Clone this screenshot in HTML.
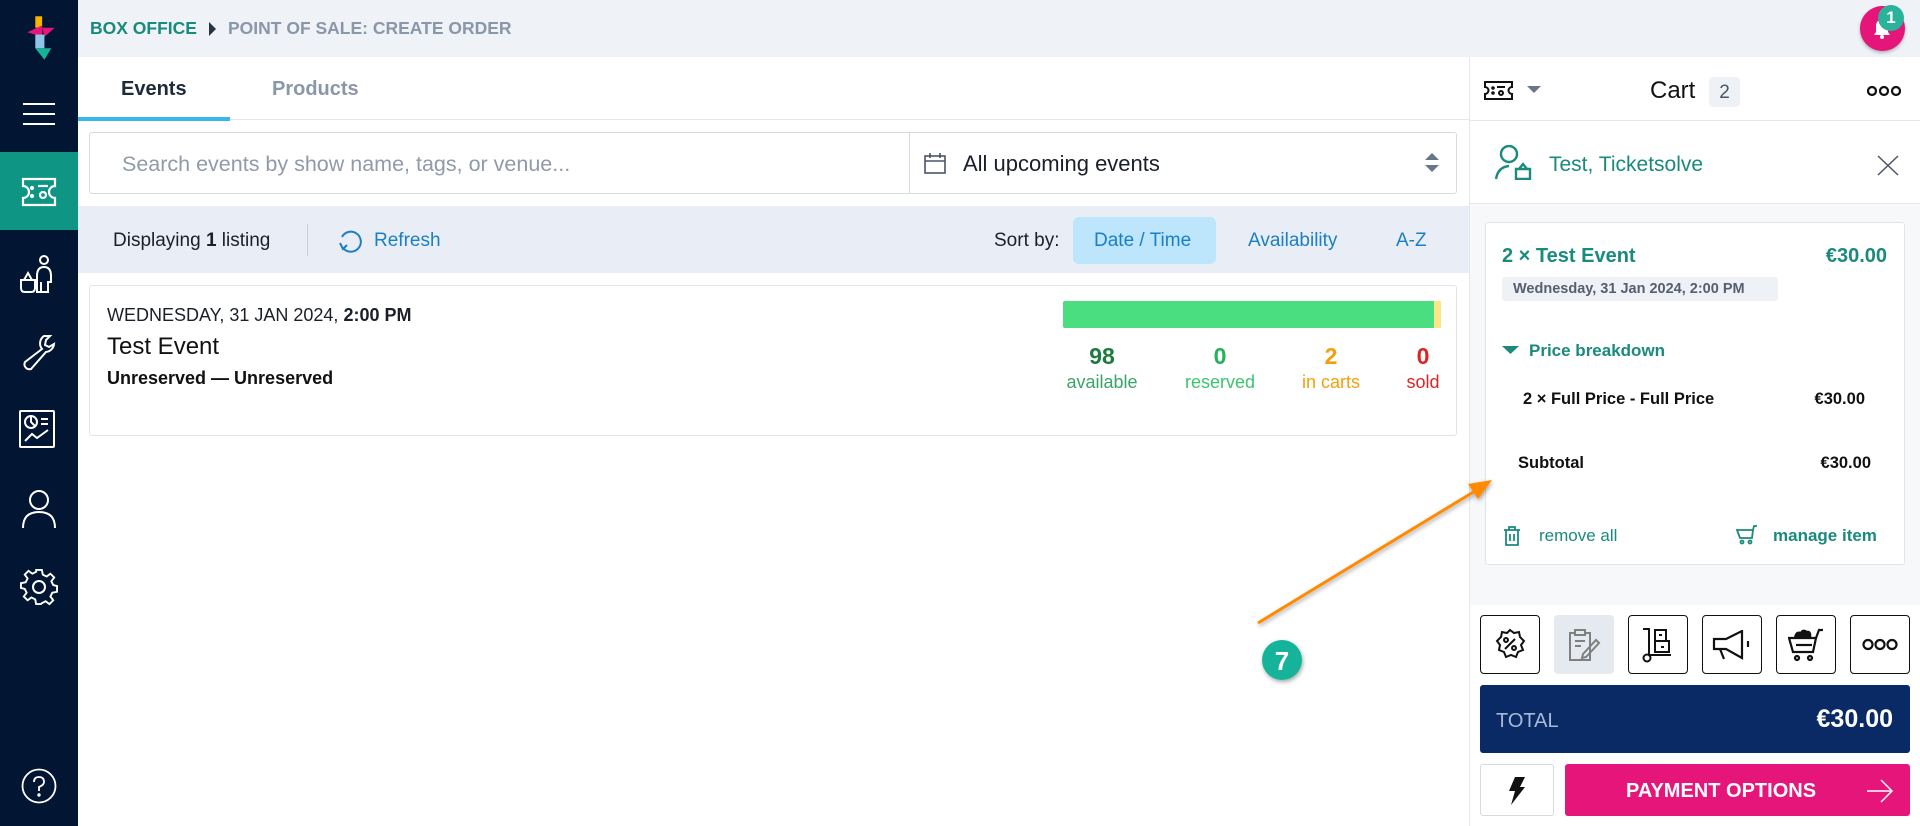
<!DOCTYPE html>
<html><head><meta charset="utf-8"><style>
*{margin:0;padding:0;box-sizing:border-box}
body{width:1920px;height:826px;position:relative;overflow:hidden;background:#fff;font-family:"Liberation Sans",sans-serif;color:#1a1f2b}
.a{position:absolute}
.sb{left:0;top:0;width:78px;height:826px;background:#021533}
.t{white-space:nowrap;line-height:1}
</style></head><body>
<div class="a sb"></div>
<!-- logo -->
<svg class="a" style="left:22px;top:14px" width="38" height="48" viewBox="0 0 30 42">
<polygon points="10,2 16,2 16,12 10,12" fill="#f7b500"/>
<polygon points="3,16 16,10 16,20" fill="#e5157a"/>
<polygon points="16,12 27,12 18,20" fill="#e5157a"/>
<polygon points="10,18 18,18 18,30 10,30" fill="#8ec6e8"/>
<polygon points="10,30 24,30 18,40" fill="#14b39a"/>
</svg>
<!-- hamburger -->
<svg class="a" style="left:23px;top:102px" width="32" height="24"><g stroke="#fff" stroke-width="2"><line x1="0" y1="2" x2="32" y2="2"/><line x1="0" y1="12" x2="32" y2="12"/><line x1="0" y1="22" x2="32" y2="22"/></g></svg>
<div class="a" style="left:0;top:152px;width:78px;height:78px;background:#0e9583"></div>
<svg class="a" style="left:20px;top:177px" width="38" height="30" viewBox="0 0 38 30" fill="none" stroke="#fff" stroke-width="2.2"><path d="M3 2H35V9A6 6 0 0 0 35 21V28H3V21A6 6 0 0 0 3 9Z"/><circle cx="12" cy="11" r="1" fill="#fff"/><circle cx="12" cy="19" r="1" fill="#fff"/><line x1="18" y1="9" x2="28" y2="9"/><circle cx="23" cy="18" r="3"/></svg>
<svg class="a" style="left:19px;top:254px" width="36" height="40" viewBox="0 0 36 40" fill="none" stroke="#fff" stroke-width="2"><circle cx="25" cy="6" r="4"/><path d="M18 38V22Q18 13 25 13Q32 13 32 22V28H29V38ZM22 38V28"/><path d="M2 26H16V34Q16 38 12 38H6Q2 38 2 34ZM5 26L9 19L13 26"/></svg>
<svg class="a" style="left:20px;top:334px" width="36" height="38" viewBox="0 0 36 38" fill="none" stroke="#fff" stroke-width="2"><path d="M24 2A9 9 0 0 0 22 15L5 28A5 5 0 0 0 11 35L26 18A9 9 0 0 0 34 10L29 13L25 11L26 6L30 2Z"/></svg>
<svg class="a" style="left:19px;top:410px" width="36" height="38" viewBox="0 0 36 38" fill="none" stroke="#fff" stroke-width="2"><rect x="1" y="1" width="34" height="36" rx="1"/><circle cx="12" cy="12" r="6"/><path d="M12 6V12L16 16"/><path d="M22 9H29M22 14H29"/><path d="M6 31L13 24L18 28L29 20"/></svg>
<svg class="a" style="left:21px;top:489px" width="36" height="40" viewBox="0 0 36 40" fill="none" stroke="#fff" stroke-width="2"><circle cx="18" cy="11" r="9"/><path d="M2 39Q2 23 18 23Q34 23 34 39"/></svg>
<svg class="a" style="left:20px;top:568px" width="38" height="38" viewBox="0 0 38 38" fill="none" stroke="#fff" stroke-width="2"><path d="M16 2H22L23 7L27 9L31 6L35 10L32 14L34 18L38 19V25L33 26L31 30L34 34L30 38L26 35L22 37L21 38H16L15 33L11 31L7 34L3 30L6 26L4 22L0 21V16L5 15L7 11L4 7L8 3L12 6L16 4Z" transform="scale(.95) translate(1,0)"/><circle cx="19" cy="19" r="6"/></svg>
<svg class="a" style="left:21px;top:768px" width="36" height="36" viewBox="0 0 36 36" fill="none" stroke="#fff" stroke-width="1.8"><circle cx="18" cy="18" r="16.5"/><path d="M13 14Q13 9 18 9Q23 9 23 14Q23 17 18 19V23"/><circle cx="18" cy="27" r="0.8" fill="#fff"/></svg>

<!-- header -->
<div class="a" style="left:78px;top:0;width:1842px;height:57px;background:#eff2f7"></div>
<div class="a t" style="left:90px;top:20px;font-size:17.5px;font-weight:bold;color:#1a8a7d">BOX OFFICE</div>
<svg class="a" style="left:209px;top:22px" width="8" height="14"><polygon points="0,0 7,7 0,14" fill="#2a3342"/></svg>
<div class="a t" style="left:228px;top:20px;font-size:17.5px;font-weight:bold;color:#8a97a8">POINT OF SALE: CREATE ORDER</div>
<div class="a" style="left:1860px;top:6px;width:45px;height:45px;border-radius:50%;background:#e5157a;box-shadow:0 2px 3px rgba(0,0,0,.25)"></div>
<svg class="a" style="left:1870px;top:16px" width="24" height="24" viewBox="0 0 24 24"><path d="M4 19L6 16V10Q6 4 12 4Q18 4 18 10V16L20 19Z" fill="#fff"/><circle cx="12" cy="21" r="2" fill="#fff"/></svg>
<div class="a t" style="left:1878px;top:5px;width:26px;height:26px;border-radius:50%;background:#2ab39a;color:#fff;font-weight:bold;font-size:17px;text-align:center;line-height:26px">1</div>

<!-- tabs -->
<div class="a t" style="left:121px;top:79px;font-size:20px;font-weight:bold;color:#1d2a3a">Events</div>
<div class="a t" style="left:272px;top:79px;font-size:20px;font-weight:bold;color:#8a97a8">Products</div>
<div class="a" style="left:78px;top:119px;width:1391px;height:1px;background:#e3e7ec"></div>
<div class="a" style="left:78px;top:117px;width:152px;height:4px;background:#38b6f0"></div>

<!-- search -->
<div class="a" style="left:89px;top:132px;width:1368px;height:62px;border:1px solid #d6dae0;border-radius:3px"></div>
<div class="a" style="left:909px;top:133px;width:1px;height:60px;background:#d6dae0"></div>
<div class="a t" style="left:122px;top:154px;font-size:21.5px;color:#8f9aab">Search events by show name, tags, or venue...</div>
<svg class="a" style="left:924px;top:153px" width="22" height="21" viewBox="0 0 22 21" fill="none" stroke="#4a5566" stroke-width="1.6"><rect x="1" y="3" width="20" height="17"/><line x1="1" y1="8" x2="21" y2="8"/><line x1="6" y1="0" x2="6" y2="5"/><line x1="16" y1="0" x2="16" y2="5"/></svg>
<div class="a t" style="left:963px;top:153px;font-size:22px;color:#1a1f2b">All upcoming events</div>
<svg class="a" style="left:1425px;top:153px" width="14" height="20"><polygon points="7,0 14,7 0,7" fill="#6b7588"/><polygon points="0,12 14,12 7,19" fill="#6b7588"/></svg>

<!-- filter bar -->
<div class="a" style="left:78px;top:206px;width:1391px;height:67px;background:#e9eef6"></div>
<div class="a t" style="left:113px;top:231px;font-size:19px;color:#1a1f2b">Displaying <b>1</b> listing</div>
<div class="a" style="left:307px;top:224px;width:1px;height:32px;background:#c8d0dc"></div>
<svg class="a" style="left:338px;top:229px" width="24" height="24" viewBox="0 0 24 24" fill="none" stroke="#1b7fc4" stroke-width="2"><path d="M6 20A10 10 0 1 0 4 8"/><path d="M2 14L5 20L9 16"/></svg>
<div class="a t" style="left:374px;top:231px;font-size:19px;color:#1b7fc4">Refresh</div>
<div class="a t" style="left:994px;top:231px;font-size:19px;color:#1a1f2b">Sort by:</div>
<div class="a" style="left:1073px;top:217px;width:143px;height:47px;border-radius:6px;background:#bde5fb"></div>
<div class="a t" style="left:1094px;top:231px;font-size:19px;color:#1b7fc4">Date / Time</div>
<div class="a t" style="left:1248px;top:231px;font-size:19px;color:#1b7fc4">Availability</div>
<div class="a t" style="left:1396px;top:231px;font-size:19px;color:#1b7fc4">A-Z</div>

<!-- event card -->
<div class="a" style="left:89px;top:285px;width:1368px;height:151px;border:1px solid #e1e5ea;border-radius:3px"></div>
<div class="a t" style="left:107px;top:306px;font-size:18px;color:#1a1f2b">WEDNESDAY, 31 JAN 2024, <b>2:00 PM</b></div>
<div class="a t" style="left:107px;top:335px;font-size:24px;color:#111">Test Event</div>
<div class="a t" style="left:107px;top:369px;font-size:18px;font-weight:bold;color:#111">Unreserved — Unreserved</div>
<div class="a" style="left:1063px;top:301px;width:371px;height:27px;background:#4ade80;border-radius:2px 0 0 2px"></div>
<div class="a" style="left:1434px;top:301px;width:7px;height:27px;background:#fde68a"></div>
<div class="a t" style="left:1052px;top:345px;width:100px;text-align:center;font-size:23px;font-weight:bold;color:#1f7a3f">98</div>
<div class="a t" style="left:1052px;top:373px;width:100px;text-align:center;font-size:18px;color:#3aa56a">available</div>
<div class="a t" style="left:1170px;top:345px;width:100px;text-align:center;font-size:23px;font-weight:bold;color:#22b35a">0</div>
<div class="a t" style="left:1170px;top:373px;width:100px;text-align:center;font-size:18px;color:#3cc46f">reserved</div>
<div class="a t" style="left:1281px;top:345px;width:100px;text-align:center;font-size:23px;font-weight:bold;color:#f59e0b">2</div>
<div class="a t" style="left:1281px;top:373px;width:100px;text-align:center;font-size:18px;color:#f59e0b">in carts</div>
<div class="a t" style="left:1385px;top:345px;width:76px;text-align:center;font-size:23px;font-weight:bold;color:#dc2626">0</div>
<div class="a t" style="left:1385px;top:373px;width:76px;text-align:center;font-size:18px;color:#dc2626">sold</div>

<!-- right panel -->
<div class="a" style="left:1469px;top:57px;width:451px;height:769px;background:#f7f8fa;border-left:1px solid #e3e7ec"></div>
<div class="a" style="left:1470px;top:57px;width:450px;height:64px;background:#fff;border-bottom:1px solid #e3e7ec"></div>
<svg class="a" style="left:1484px;top:81px" width="29" height="19" viewBox="0 0 29 19" fill="none" stroke="#111" stroke-width="2"><path d="M1 1H28V6A3.5 3.5 0 0 0 28 13V18H1V13A3.5 3.5 0 0 0 1 6Z"/><circle cx="9" cy="7" r=".8" fill="#111"/><circle cx="9" cy="12" r=".8" fill="#111"/><line x1="13" y1="6" x2="21" y2="6"/><circle cx="17" cy="12" r="2"/></svg>
<svg class="a" style="left:1527px;top:86px" width="14" height="8"><polygon points="0,0 14,0 7,7" fill="#6b7588"/></svg>
<div class="a t" style="left:1650px;top:79px;font-size:24px;color:#111">Cart</div>
<div class="a t" style="left:1709px;top:77px;width:31px;height:30px;border-radius:4px;background:#eef1f5;color:#4a5566;font-size:19px;text-align:center;line-height:32px">2</div>
<svg class="a" style="left:1867px;top:85px" width="34" height="12" fill="none" stroke="#111" stroke-width="2.2"><circle cx="5" cy="6" r="4"/><circle cx="17" cy="6" r="4"/><circle cx="29" cy="6" r="4"/></svg>
<div class="a" style="left:1470px;top:121px;width:450px;height:83px;background:#fff;border-bottom:1px solid #e3e7ec"></div>
<svg class="a" style="left:1494px;top:145px" width="38" height="35" viewBox="0 0 38 35" fill="none" stroke="#1a8a7d" stroke-width="2.4"><circle cx="15" cy="9" r="8"/><path d="M2 34Q4 22 15 21"/><path d="M22 24H36V34H22Z"/><path d="M25 24L29 19L33 24"/></svg>
<div class="a t" style="left:1549px;top:154px;font-size:21px;color:#1a8a7d">Test, Ticketsolve</div>
<svg class="a" style="left:1877px;top:155px" width="22" height="21" stroke="#4a5566" stroke-width="1.5"><line x1="1" y1="1" x2="21" y2="20"/><line x1="21" y1="1" x2="1" y2="20"/></svg>

<div class="a" style="left:1485px;top:222px;width:420px;height:343px;background:#fff;border:1px solid #e1e5ea;border-radius:3px"></div>
<div class="a t" style="left:1502px;top:246px;font-size:20px;font-weight:bold;color:#1a8a7d">2 × Test Event</div>
<div class="a t" style="left:1780px;top:246px;width:107px;text-align:right;font-size:20px;font-weight:bold;color:#1a8a7d">€30.00</div>
<div class="a t" style="left:1502px;top:277px;width:276px;height:24px;border-radius:3px;background:#eef1f5;color:#555f70;font-size:14.5px;font-weight:bold;line-height:24px;padding-left:11px">Wednesday, 31 Jan 2024, 2:00 PM</div>
<svg class="a" style="left:1502px;top:346px" width="17" height="9"><polygon points="0,0 17,0 8.5,8" fill="#1a8a7d"/></svg>
<div class="a t" style="left:1529px;top:342px;font-size:17px;font-weight:bold;color:#1a8a7d">Price breakdown</div>
<div class="a t" style="left:1523px;top:391px;font-size:16.5px;font-weight:bold;color:#111">2 × Full Price - Full Price</div>
<div class="a t" style="left:1760px;top:391px;width:105px;text-align:right;font-size:16.5px;font-weight:bold;color:#111">€30.00</div>
<div class="a t" style="left:1518px;top:455px;font-size:16.5px;font-weight:bold;color:#111">Subtotal</div>
<div class="a t" style="left:1766px;top:455px;width:105px;text-align:right;font-size:16.5px;font-weight:bold;color:#111">€30.00</div>
<svg class="a" style="left:1503px;top:526px" width="18" height="20" viewBox="0 0 18 20" fill="none" stroke="#1a8a7d" stroke-width="1.8"><path d="M1 4H17M6 4V1H12V4M3 4V19H15V4M7 8V15M11 8V15"/></svg>
<div class="a t" style="left:1539px;top:527px;font-size:17px;color:#1a8a7d">remove all</div>
<svg class="a" style="left:1736px;top:525px" width="22" height="20" viewBox="0 0 22 20" fill="none" stroke="#1a8a7d" stroke-width="1.8"><path d="M1 5H17L16 13H4ZM17 5L18 1H21"/><circle cx="6" cy="17" r="1.5"/><circle cx="14" cy="17" r="1.5"/></svg>
<div class="a t" style="left:1773px;top:527px;font-size:17px;font-weight:bold;color:#1a8a7d">manage item</div>

<div class="a" style="left:1470px;top:605px;width:450px;height:221px;background:#fff"></div>
<div class="a" style="left:1480px;top:615px;width:60px;height:59px;border:1.5px solid #111;border-radius:4px"></div>
<svg class="a" style="left:1494px;top:628px" width="32" height="32" viewBox="0 0 32 32" fill="none" stroke="#111" stroke-width="2"><path d="M16 2L20 5L25 4L26 9L30 13L27 17L29 22L24 24L22 29L17 27L12 29L10 24L5 22L6 17L3 13L7 9L8 4L13 5Z"/><line x1="11" y1="21" x2="21" y2="11"/><circle cx="12" cy="12" r="2"/><circle cx="20" cy="20" r="2"/></svg>
<div class="a" style="left:1554px;top:615px;width:60px;height:59px;background:#e5e9f0;border-radius:4px"></div>
<svg class="a" style="left:1566px;top:627px" width="36" height="36" viewBox="0 0 36 36" fill="none" stroke="#808080" stroke-width="2"><path d="M20 6H24V33H4V6H8"/><rect x="9" y="3" width="10" height="5"/><line x1="9" y1="14" x2="19" y2="14"/><line x1="9" y1="19" x2="15" y2="19"/><path d="M17 27L30 13L33 16L20 30L16 31Z"/></svg>
<div class="a" style="left:1628px;top:615px;width:60px;height:59px;border:1.5px solid #111;border-radius:4px"></div>
<svg class="a" style="left:1641px;top:627px" width="34" height="36" viewBox="0 0 34 36" fill="none" stroke="#111" stroke-width="2"><path d="M2 2H8V28H30"/><circle cx="6" cy="31" r="3.5"/><rect x="14" y="3" width="11" height="11"/><rect x="14" y="14" width="14" height="11"/><line x1="18" y1="8" x2="21" y2="8"/><line x1="20" y1="20" x2="23" y2="20"/></svg>
<div class="a" style="left:1702px;top:615px;width:60px;height:59px;border:1.5px solid #111;border-radius:4px"></div>
<svg class="a" style="left:1712px;top:630px" width="40" height="30" viewBox="0 0 40 30" fill="none" stroke="#111" stroke-width="2.2"><path d="M2 9H14L30 1V28L14 19H2Z"/><path d="M8 19L12 29"/><line x1="36" y1="11" x2="36" y2="17"/></svg>
<div class="a" style="left:1776px;top:615px;width:60px;height:59px;border:1.5px solid #111;border-radius:4px"></div>
<svg class="a" style="left:1788px;top:627px" width="36" height="36" viewBox="0 0 36 36" fill="none" stroke="#111" stroke-width="2.2"><path d="M1 11H28L25 25H5Z"/><path d="M28 11L31 3H35"/><line x1="8" y1="18" x2="24" y2="18"/><circle cx="9" cy="31" r="2"/><circle cx="22" cy="31" r="2"/><path d="M7 11Q8 4 13 6Q15 2 19 5Q23 4 22 11" fill="#111"/></svg>
<div class="a" style="left:1850px;top:615px;width:60px;height:59px;border:1.5px solid #111;border-radius:4px"></div>
<svg class="a" style="left:1862px;top:638px" width="36" height="13" fill="none" stroke="#111" stroke-width="2.2"><circle cx="6" cy="6.5" r="4.5"/><circle cx="18" cy="6.5" r="4.5"/><circle cx="30" cy="6.5" r="4.5"/></svg>

<div class="a" style="left:1480px;top:685px;width:430px;height:68px;background:#0a2a66;border-radius:3px"></div>
<div class="a t" style="left:1496px;top:711px;font-size:20px;color:#a8b8d8">TOTAL</div>
<div class="a t" style="left:1750px;top:707px;width:143px;text-align:right;font-size:25px;font-weight:bold;color:#fff">€30.00</div>
<div class="a" style="left:1480px;top:764px;width:74px;height:52px;border:1px solid #d6dae0;border-radius:3px;background:#fff"></div>
<svg class="a" style="left:1508px;top:777px" width="18" height="28" viewBox="0 0 18 28"><polygon points="7,0 17,0 12,10 17,10 3,28 7,14 1,14" fill="#111"/></svg>
<div class="a" style="left:1565px;top:764px;width:345px;height:52px;background:#e5157a;border-radius:3px"></div>
<div class="a t" style="left:1626px;top:781px;font-size:20px;font-weight:bold;color:#fff">PAYMENT OPTIONS</div>
<svg class="a" style="left:1867px;top:779px" width="27" height="24" fill="none" stroke="#fff" stroke-width="1.5"><line x1="0" y1="12" x2="25" y2="12"/><path d="M14 1L25 12L14 23"/></svg>

<!-- annotation -->
<svg class="a" style="left:0;top:0" width="1920" height="826">
<defs><filter id="sh"><feDropShadow dx="1" dy="2" stdDeviation="2" flood-opacity=".35"/></filter></defs>
<g filter="url(#sh)"><line x1="1258" y1="623" x2="1480" y2="488" stroke="#ff8a00" stroke-width="3"/>
<polygon points="1492,480 1468,484 1478,499" fill="#ff8a00"/>
<circle cx="1282" cy="660" r="20" fill="#17b39b"/></g>
<text x="1282" y="670" text-anchor="middle" font-family="Liberation Sans" font-weight="bold" font-size="26" fill="#fff">7</text>
</svg>
</body></html>
